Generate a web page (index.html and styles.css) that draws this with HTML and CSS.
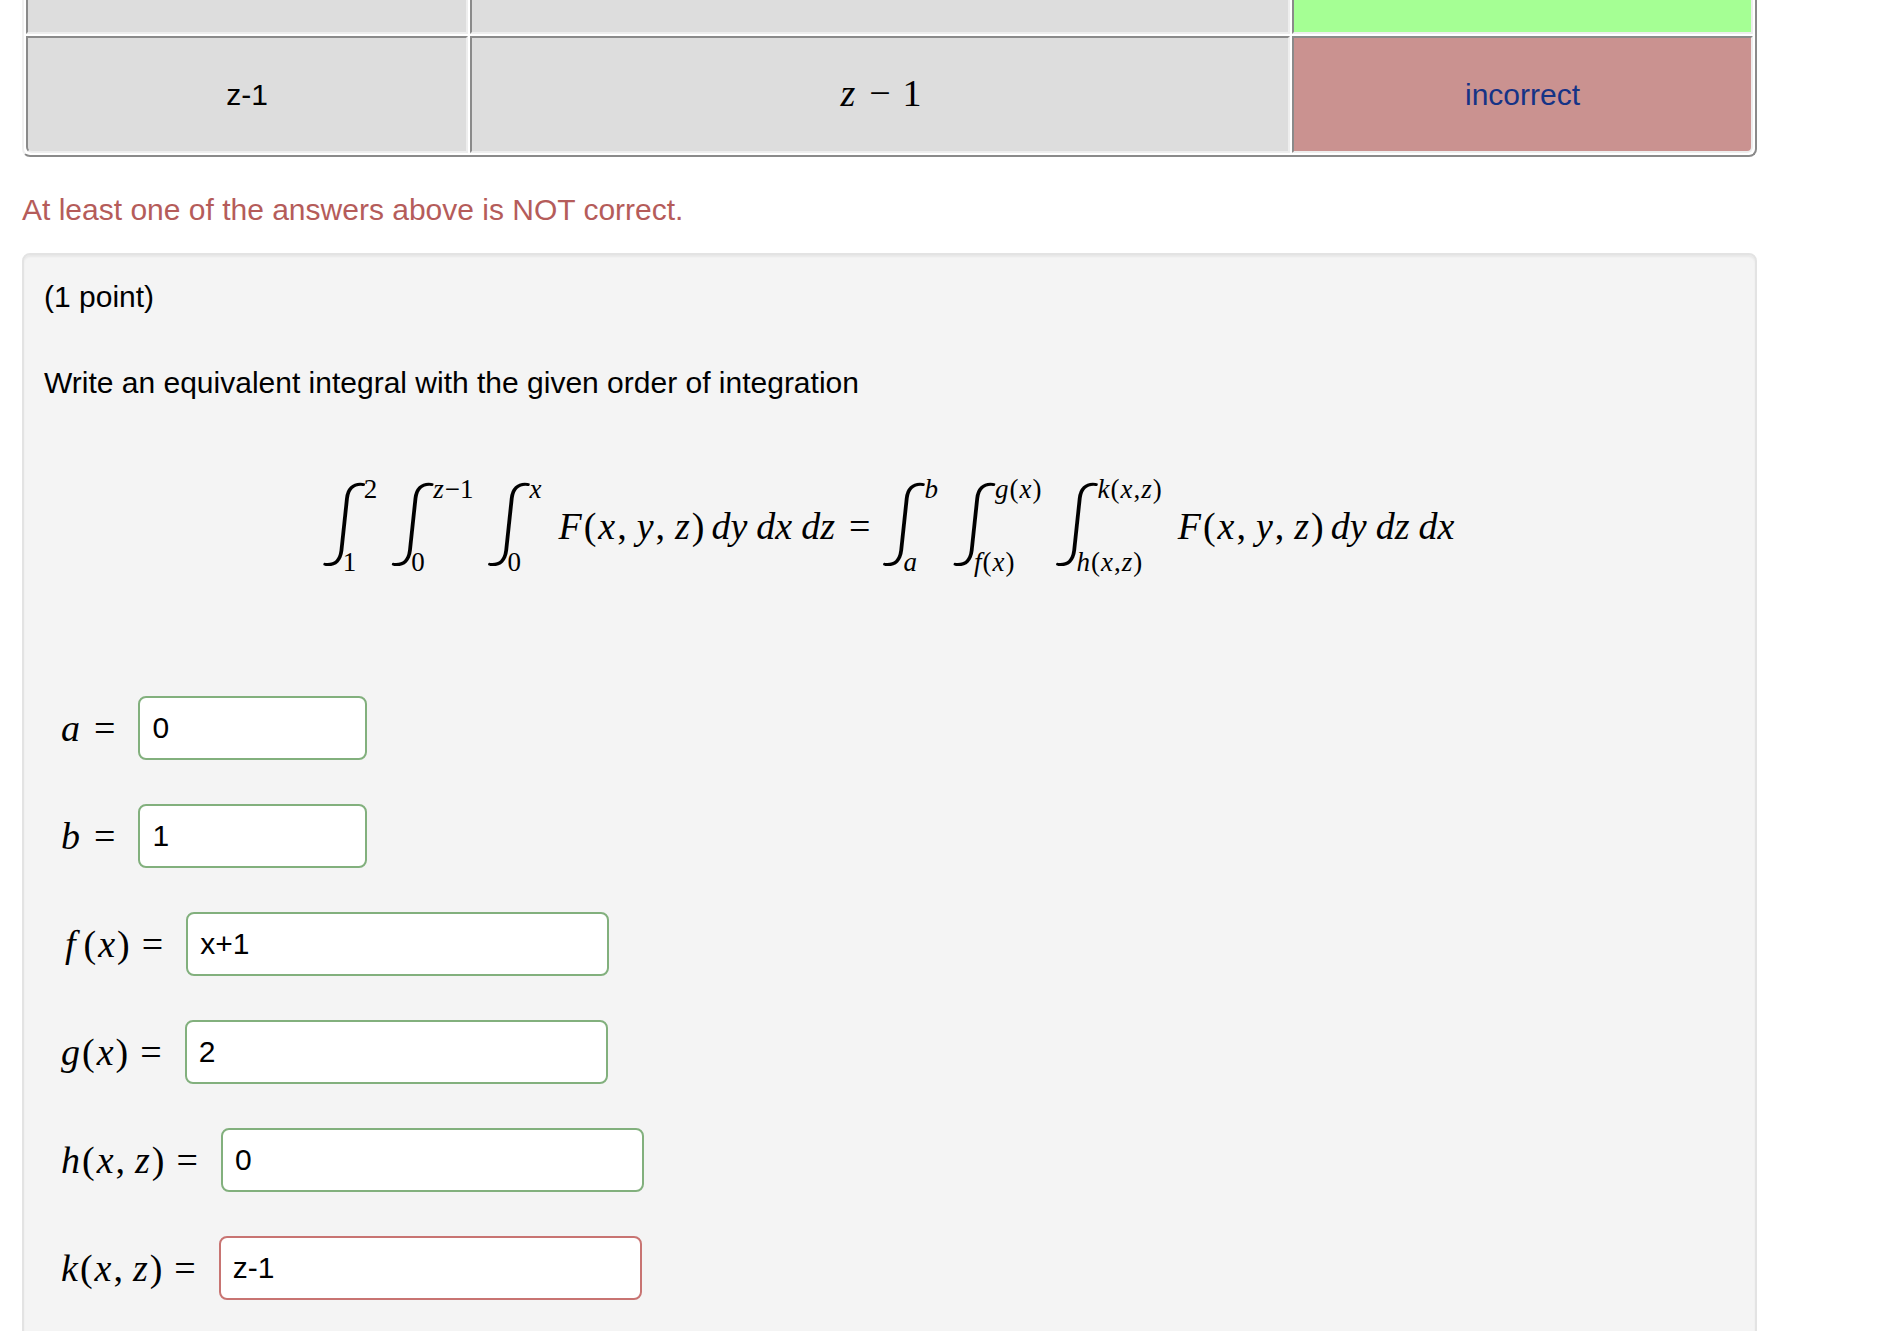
FILE: index.html
```html
<!DOCTYPE html>
<html lang="en">
<head>
    <meta charset="UTF-8">
    <meta name="viewport" content="width=device-width, initial-scale=1.0">
    <title>Triple Integrals</title>
    <link rel="stylesheet" href="styles.css">
</head>
<body>
    <table class="results">
        <tr>
            <td class="entered"></td>
            <td class="preview"></td>
            <td class="result correct"></td>
        </tr>
        <tr>
            <td class="entered">z-1</td>
            <td class="preview"><span class="math"><i>z</i><span class="op">−</span>1</span></td>
            <td class="result incorrect"><a href="#k">incorrect</a></td>
        </tr>
    </table>

    <p class="result-message">At least one of the answers above is NOT correct.</p>

    <form class="problem">
        <p>(1 point)</p>
        <p>Write an equivalent integral with the given order of integration</p>

        <div class="math equation">
            <span class="integral"><span class="sign">∫</span><span class="limits"><span class="upper">2</span><span class="lower">1</span></span></span>
            <span class="integral"><span class="sign">∫</span><span class="limits"><span class="upper"><i>z</i>−1</span><span class="lower">0</span></span></span>
            <span class="integral"><span class="sign">∫</span><span class="limits"><span class="upper"><i>x</i></span><span class="lower">0</span></span></span>
            <span><i>F</i>(<i>x</i><span class="comma">,</span><i>y</i><span class="comma">,</span><i>z</i>)</span>
            <span class="diff"><i>dy</i></span>
            <span class="diff"><i>dx</i></span>
            <span class="diff"><i>dz</i></span>
            <span class="op">=</span>
            <span class="integral"><span class="sign">∫</span><span class="limits"><span class="upper"><i>b</i></span><span class="lower"><i>a</i></span></span></span>
            <span class="integral"><span class="sign">∫</span><span class="limits"><span class="upper"><i>g</i>(<i>x</i>)</span><span class="lower"><i class="f">f</i>(<i>x</i>)</span></span></span>
            <span class="integral"><span class="sign">∫</span><span class="limits"><span class="upper"><i>k</i>(<i>x</i>,<i>z</i>)</span><span class="lower"><i>h</i>(<i>x</i>,<i>z</i>)</span></span></span>
            <span><i>F</i>(<i>x</i><span class="comma">,</span><i>y</i><span class="comma">,</span><i>z</i>)</span>
            <span class="diff"><i>dy</i></span>
            <span class="diff"><i>dz</i></span>
            <span class="diff"><i>dx</i></span>
        </div>

        <div class="answers">
            <div class="answer">
                <label class="math" for="a"><i>a</i><span class="op">=</span></label>
                <input type="text" id="a" class="short" value="0">
            </div>
            <div class="answer">
                <label class="math" for="b"><i>b</i><span class="op">=</span></label>
                <input type="text" id="b" class="short" value="1">
            </div>
            <div class="answer">
                <label class="math" for="f"><i class="f">f</i>(<i>x</i>)<span class="op">=</span></label>
                <input type="text" id="f" value="x+1">
            </div>
            <div class="answer">
                <label class="math" for="g"><i>g</i>(<i>x</i>)<span class="op">=</span></label>
                <input type="text" id="g" value="2">
            </div>
            <div class="answer">
                <label class="math" for="h"><i>h</i>(<i>x</i><span class="comma">,</span><i>z</i>)<span class="op">=</span></label>
                <input type="text" id="h" value="0">
            </div>
            <div class="answer">
                <label class="math" for="k"><i>k</i>(<i>x</i><span class="comma">,</span><i>z</i>)<span class="op">=</span></label>
                <input type="text" id="k" class="wrong" value="z-1">
            </div>
        </div>
    </form>
</body>
</html>
```

FILE: styles.css
```css
* {
    box-sizing: border-box;
}
body {
    margin: 0;
    padding: 0 120px 0 22px;
    background-color: #fff;
    color: #000;
    font-family: "Liberation Sans", Arial, sans-serif;
    font-size: 30px;
    line-height: 43px;
}
p {
    margin: 0;
}

/* Results table */
.results {
    width: 100%;
    table-layout: fixed;
    border: 2px solid #8a8a8a;
    border-top: none;
    border-left-color: #f0f0f0;
    border-radius: 0 0 8px 8px;
    border-collapse: separate;
    border-spacing: 2px;
    margin-top: -2px;
}
.results td {
    height: 117px;
    padding: 0;
    border: 2px solid #8a8a8a;
    border-right-color: #eee;
    border-bottom-color: #eee;
    background-color: #ddd;
    text-align: center;
}
.results tr:first-child td {
    height: 34px;
    border-top: none;
}
.results tr:last-child td:first-child {
    border-bottom-left-radius: 6px;
}
.results tr:last-child td:last-child {
    border-bottom-right-radius: 6px;
}
.entered {
    width: 442px;
}
.result {
    width: 461px;
}
.results .correct {
    background-color: #a5ff94;
}
.results .incorrect {
    background-color: #ca9290;
}
.results a {
    color: #153386;
    text-decoration: none;
}
.result-message {
    padding: 31px 0 22px;
    color: #b55c5a;
}

/* Problem */
.problem {
    padding: 20px 20px 80px;
    border: 2px solid #e3e3e3;
    border-radius: 8px;
    background-color: #f4f4f4;
    box-shadow: inset 0 2px 2px rgba(0, 0, 0, 0.05);
}
.problem p {
    margin-bottom: 43px;
}
.math {
    font-family: "Liberation Serif", "Times New Roman", serif;
    font-size: 38px;
    white-space: nowrap;
}
.math i {
    margin: 0 2px;
}
.math .f {
    margin: 0 8px 0 6px;
}
.op {
    margin: 0 12px;
}
.comma {
    margin-right: 8px;
}
.equation {
    display: flex;
    justify-content: center;
    align-items: center;
    height: 116px;
    margin-top: 64px;
}
.diff {
    margin-left: 5px;
}
.integral {
    display: flex;
    margin-right: 14px;
}
.sign {
    width: 20px;
    font-family: Lato, sans-serif;
    font-size: 84px;
    font-weight: 300;
    line-height: 88px;
}
.limits {
    display: flex;
    flex-direction: column;
    justify-content: space-between;
    height: 102px;
    font-size: 27px;
    line-height: 29px;
}
.limits i,
.limits .f {
    margin: 0 1px;
}
.upper {
    margin-left: 21px;
}

/* Answer blanks */
.answers {
    display: flex;
    flex-direction: column;
    gap: 44px;
    margin-top: 112px;
    padding-left: 15px;
}
.answer {
    display: flex;
    align-items: center;
    gap: 11px;
}
.answer input {
    width: 423px;
    height: 64px;
    padding: 0 12px;
    border: 2px solid #82b07d;
    border-radius: 8px;
    background-color: #fff;
    color: #000;
    font-family: inherit;
    font-size: 30px;
}
.answer .short {
    width: 229px;
}
.answer .wrong {
    border-color: #c87472;
}
```
